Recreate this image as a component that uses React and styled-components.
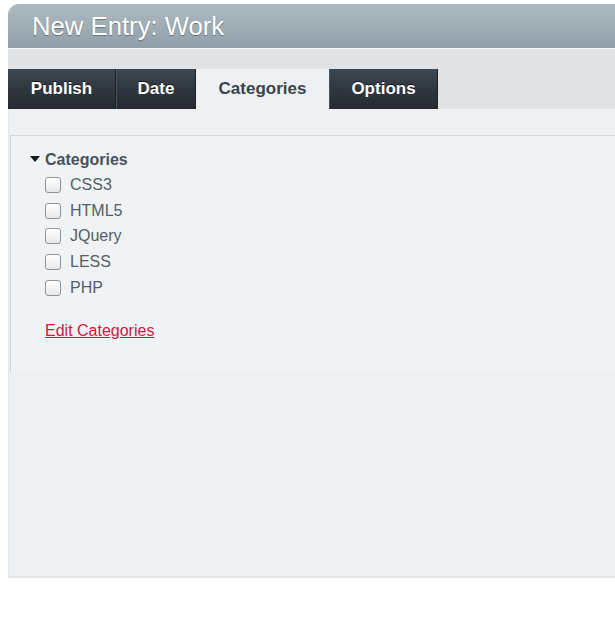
import React, { useState } from 'react';
import styled, { createGlobalStyle } from 'styled-components';

const GlobalStyle = createGlobalStyle`
  *, *::before, *::after {
    box-sizing: border-box;
  }
  html, body {
    margin: 0;
    padding: 0;
    background: #fefefe;
    font-family: "Liberation Sans", Arial, Helvetica, sans-serif;
  }
`;

const tabs = [
  { name: 'Publish', width: 108 },
  { name: 'Date', width: 80 },
  { name: 'Categories', width: 133 },
  { name: 'Options', width: 109 },
];
const categories = ['CSS3', 'HTML5', 'JQuery', 'LESS', 'PHP'];

function App() {
  const [active, setActive] = useState('Categories');
  const [checked, setChecked] = useState({});

  const toggle = (name) => {
    setChecked((prev) => ({ ...prev, [name]: !prev[name] }));
  }

  return (
    <>
      <GlobalStyle />
      <Page>
        <Header>
          <Title>New Entry: Work</Title>
        </Header>
        <TabBar>
          {tabs.map((tab) => (
            <Tab
              key={tab.name}
              $w={tab.width}
              $active={tab.name === active}
              onClick={() => setActive(tab.name)}
            >
              {tab.name}
            </Tab>
          ))}
        </TabBar>
        <Content>
          <Panel>
            <Heading>
              <Arrow />
              Categories
            </Heading>
            <List>
              {categories.map((cat) => (
                <Row key={cat} onClick={() => toggle(cat)}>
                  <Box $checked={!!checked[cat]} />
                  <Label>{cat}</Label>
                </Row>
              ))}
            </List>
            <EditLink href="#">Edit Categories</EditLink>
          </Panel>
        </Content>
      </Page>
    </>
  );
}

const Page = styled.div`
  margin: 4px 0 0 8px;
  overflow: hidden;
`;

const Header = styled.div`
  height: 45px;
  border-top-left-radius: 11px;
  background: linear-gradient(to bottom, #adbac0 0%, #9eacb4 55%, #8e9ea8 100%);
  border-bottom: 1px solid #f4f6f7;
  display: flex;
  align-items: center;
  padding-left: 24px;
`;

const Title = styled.h1`
  margin: 0;
  font-size: 25.7px;
  font-weight: normal;
  color: #ffffff;
  text-shadow: 0 1px 1px rgba(60, 70, 80, 0.55);
`;

const TabBar = styled.div`
  display: flex;
  align-items: flex-end;
  height: 60px;
  background: #e0e3e6;
`;

const Tab = styled.button`
  width: ${(p) => p.$w}px;
  height: 40px;
  padding: 0;
  border: none;
  border-left: 1px solid ${(p) => (p.$active ? 'transparent' : '#4a545d')};
  border-right: 1px solid ${(p) => (p.$active ? 'transparent' : '#1c2126')};
  background: ${(p) =>
    p.$active ? '#eef1f4' : 'linear-gradient(to bottom, #3e4852 0%, #2f373f 50%, #242a30 100%)'};
  color: ${(p) => (p.$active ? '#3b434b' : '#ffffff')};
  font-family: "Liberation Sans", Arial, sans-serif;
  font-size: 17px;
  font-weight: bold;
  text-shadow: ${(p) => (p.$active ? 'none' : '0 -1px 0 rgba(0,0,0,0.6)')};
  cursor: pointer;
  &:first-child {
    border-left: none;
  }
`;

const Content = styled.div`
  background: #eef1f4;
  height: 469px;
  padding: 26px 0 0 1px;
  border-left: 1px solid #e4e6e8;
  border-bottom: 2px solid #e4e4e8;
`;

const Panel = styled.div`
  height: 237px;
  border-top: 1px solid #d2d6d9;
  border-left: 1px solid #d2d6d9;
  background: #f0f3f5;
  padding: 14px 0 0 19px;
`;

const Heading = styled.div`
  display: flex;
  align-items: center;
  font-size: 16px;
  font-weight: bold;
  color: #48525b;
  height: 20px;
`;

const Arrow = styled.span`
  width: 0;
  height: 0;
  border-left: 5px solid transparent;
  border-right: 5px solid transparent;
  border-top: 6px solid #151a1e;
  margin-right: 5px;
  margin-top: -3px;
`;

const List = styled.div`
  display: flex;
  flex-direction: column;
  padding-left: 15px;
  margin-top: 2px;
`;

const Row = styled.div`
  display: flex;
  align-items: center;
  height: 25.75px;
  cursor: pointer;
`;

const Box = styled.span`
  width: 16px;
  height: 16px;
  border: 1px solid #8d949a;
  border-radius: 3px;
  background: ${(p) =>
    p.$checked ? 'linear-gradient(#6aa6e8, #2f74c9)' : 'linear-gradient(to bottom, #ffffff, #e6e8ea)'};
  margin-right: 9px;
  box-shadow: inset 0 1px 1px rgba(255,255,255,0.8);
`;

const Label = styled.span`
  font-size: 16px;
  color: #545e67;
`;

const EditLink = styled.a`
  display: inline-block;
  margin: 21px 0 0 15px;
  font-size: 16px;
  color: #cc1a3c;
  text-decoration: underline;
`;

export default App;
